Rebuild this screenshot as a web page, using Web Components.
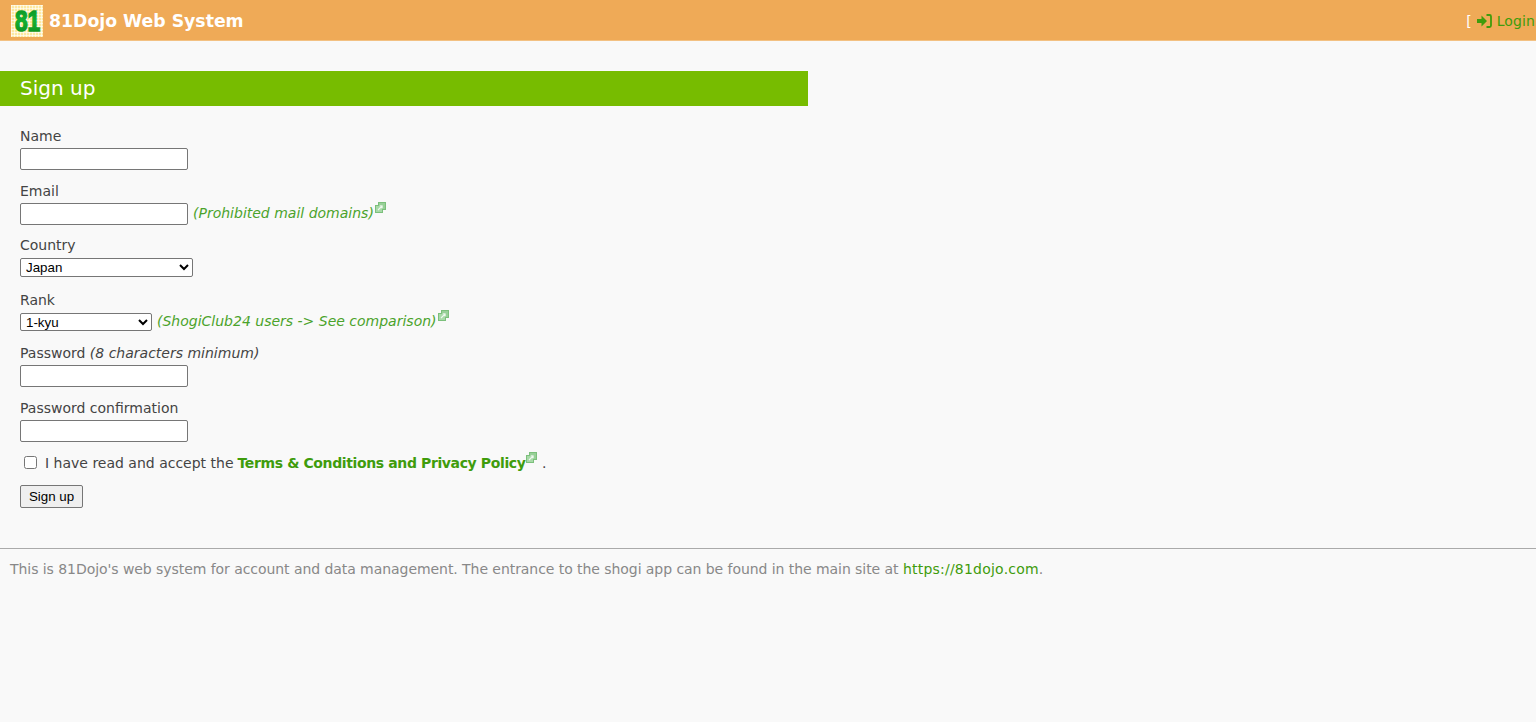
<!DOCTYPE html>
<html lang="en"><head><meta charset="utf-8"><title>81Dojo Web System</title>
<style>
html,body{margin:0;padding:0;background:#f9f9f9;height:100%}
body{font:14px/20px "DejaVu Sans",sans-serif;color:#444;overflow:hidden}
</style></head><body>
<template id="t-ext"><style>:host{display:inline-block;width:11px;height:11px;vertical-align:5px;margin-left:1px}svg{display:block}</style>
<svg width="11" height="11" viewBox="0 0 11 11"><rect x="3.5" y=".5" width="7" height="7" fill="#98d098" stroke="#7cc07c"/><rect x=".5" y="3.5" width="7" height="7" fill="#a8daa8" stroke="#7cc07c"/><path d="M3 8 7 4M4.5 3.8H7.2V6.5" fill="none" stroke="#eef8ee" stroke-width="1.1"/></svg></template>

<template id="t-header"><style>
:host{display:flex;align-items:center;justify-content:space-between;height:41px;background:#efaa57;box-shadow:inset 0 -1px 0 #f3c183}
.brand{display:flex;align-items:center;margin-left:11px;gap:6px;font:bold 17.3px "DejaVu Sans",sans-serif;color:#fff}
.logo{width:32px;height:32px;flex:none;background-color:#fde8a0;background-image:linear-gradient(#fff9 1px,transparent 1px),linear-gradient(90deg,#fff9 1px,transparent 1px);background-size:3px 3px}
.logo svg{display:block}
.logo text{font:bold 29px "Liberation Sans",sans-serif}
.login{margin-right:1px;color:#fff;display:flex;align-items:center;gap:5px}
a{color:#3f9c0c;text-decoration:none;display:flex;align-items:center;gap:5px;letter-spacing:.1px}
</style><div class="brand"><div class="logo"><svg width="32" height="32" viewBox="0 0 32 32"><defs><linearGradient id="g" x1="0" y1="0" x2="0" y2="1"><stop offset="0" stop-color="#0a8c20"/><stop offset=".5" stop-color="#14b030"/><stop offset="1" stop-color="#0a861c"/></linearGradient></defs><text transform="translate(4 26) scale(.78 1)" fill="url(#g)" stroke="url(#g)" stroke-width="1.500">81</text></svg></div><span>81Dojo Web System</span></div>
<div class="login">[<a href="#"><svg width="15" height="14" viewBox="0 0 15 14"><path d="M0 5H4.5V1.6L10 7 4.500 12.400V9H0Z" fill="#3f9c0c"/><path d="M9.500 1H12.500Q14 1 14 2.500V11.500Q14 13 12.500 13H9.500" fill="none" stroke="#3f9c0c" stroke-width="1.800"/></svg>Login</a></div></template>

<template id="t-title"><style>:host{display:block;width:808px;height:35px;margin-top:30px;background:#77bc00;color:#fff;box-sizing:border-box;padding-left:20px;font-size:20px;line-height:35px}</style><slot></slot></template>

<template id="t-field"><style>:host{display:block;height:54.5px}
label{display:block;height:22px;line-height:21px}
.c{display:flex;align-items:flex-start}
</style><label><slot name="label"></slot></label><div class="c"><slot></slot></div></template>

<template id="t-input"><style>:host{display:block}input{display:block;box-sizing:border-box;width:168px;height:22px;margin:0;padding:1px 2px;border:1px solid #767676;border-radius:2px;background:#fff}</style><input type="text"></template>

<template id="t-select"><style>:host{display:block;margin-top:1px}select{display:block;box-sizing:border-box;margin:0;height:18.6px;background:#fff;border:1px solid #767676;border-radius:2px;font:13.33px "Liberation Sans",sans-serif;color:#000;padding:0 0 0 1px}</style><select></select></template>

<template id="t-foot"><style>:host{display:block;margin-top:40px;border-top:1px solid #aaa;padding:10px 10px;color:#888;letter-spacing:-.06px}</style><slot></slot></template>

<template id="t-page"><style>
:host{display:block}
form{display:block;padding:20px 20px 0}
.ia{color:#4ba32b;font-style:italic;text-decoration:none;margin-left:5px;margin-top:-.5px}
.short{height:53.9px}
.short .ia{margin-top:-1.5px}
.terms{display:flex;align-items:center;height:22px;margin-top:-.8px;padding-left:3px}
.terms input{margin:0 8px 0 1px;width:13px;height:13px}
.terms a{color:#3f9c0c;font-weight:bold;letter-spacing:-.38px;text-decoration:none;margin-left:4px}
button{display:block;margin-top:11px;width:63px;height:23px;box-sizing:border-box;padding:0;background:#efefef;border:1px solid #767676;border-radius:2px;font:13.33px "Liberation Sans",sans-serif;color:#000}
a{color:#3f9c0c;text-decoration:none}
.site{letter-spacing:.22px}
</style>
<dojo-header></dojo-header>
<dojo-title>Sign up</dojo-title>
<form onsubmit="return false">
<dojo-field><span slot="label">Name</span><dojo-input></dojo-input></dojo-field>
<dojo-field><span slot="label">Email</span><dojo-input></dojo-input><a class="ia" href="#">(Prohibited mail domains)<dojo-ext></dojo-ext></a></dojo-field>
<dojo-field><span slot="label">Country</span><dojo-select data-w="173" data-v="Japan"></dojo-select></dojo-field>
<dojo-field class="short"><span slot="label">Rank</span><dojo-select data-w="132" data-v="1-kyu"></dojo-select><a class="ia" href="#">(ShogiClub24 users -&gt; See comparison)<dojo-ext></dojo-ext></a></dojo-field>
<dojo-field><span slot="label">Password <i>(8 characters minimum)</i></span><dojo-input></dojo-input></dojo-field>
<dojo-field><span slot="label">Password confirmation</span><dojo-input></dojo-input></dojo-field>
<div class="terms"><input type="checkbox"><span>I have read and accept the</span><a href="#">Terms &amp; Conditions and Privacy Policy<dojo-ext></dojo-ext></a><span>&nbsp;.</span></div>
<button type="button">Sign up</button>
</form>
<dojo-foot>This is 81Dojo's web system for account and data management. The entrance to the shogi app can be found in the main site at <a class="site" href="#">https://81dojo.com</a>.</dojo-foot>
</template>
<dojo-page></dojo-page>
<script>
function def(name,tid,init){customElements.define(name,class extends HTMLElement{constructor(){super();this.attachShadow({mode:'open'}).appendChild(document.getElementById(tid).content.cloneNode(true))}connectedCallback(){init&&init(this)}})}
def('dojo-ext','t-ext');def('dojo-header','t-header');def('dojo-title','t-title');def('dojo-field','t-field');def('dojo-input','t-input');def('dojo-foot','t-foot');
def('dojo-select','t-select',e=>{const s=e.shadowRoot.querySelector('select');s.style.width=e.dataset.w+'px';if(!s.options.length)s.add(new Option(e.dataset.v))});
def('dojo-page','t-page');
</script></body></html>
